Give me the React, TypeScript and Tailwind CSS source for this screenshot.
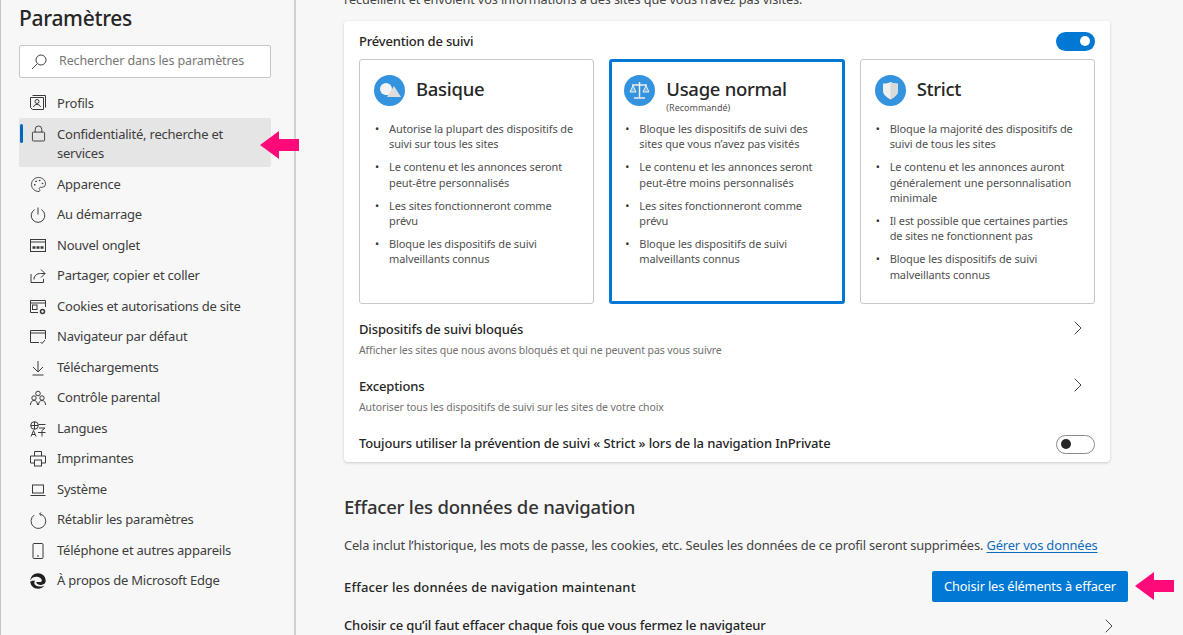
import { ChevronRight, Palette } from 'lucide-react';
import type { ReactNode } from 'react';

const FONT = "font-['Noto_Sans','Open_Sans',sans-serif]";

function Ic({ children }: { children: ReactNode }) {
  return (
    <svg viewBox="0 0 16 16" fill="none" stroke="currentColor" strokeWidth="1" className="w-4 h-4 text-[#3a3a3a]">
      {children}
    </svg>
  );
}

const NAV_TOP: { label: string; icon: ReactNode }[] = [
  {
    label: 'Apparence',
    icon: <Palette className="w-[17px] h-[17px] text-[#3a3a3a]" strokeWidth={1.2} />,
  },
  {
    label: 'Au démarrage',
    icon: (
      <Ic>
        <path d="M8 0.500v7" />
        <path d="M4.500 2.700a6.800 6.800 0 1 0 7 0" />
      </Ic>
    ),
  },
  {
    label: 'Nouvel onglet',
    icon: (
      <Ic>
        <rect x="0.500" y="1.500" width="15" height="12" />
        <path d="M0.500 4h15" />
        <path d="M2.500 9.500h3M6.500 9.500h3M10.500 9.500h3" strokeWidth="2.500" />
      </Ic>
    ),
  },
  {
    label: 'Partager, copier et coller',
    icon: (
      <Ic>
        <path d="M1 6v8.500h12.500V11" />
        <path d="M4 11.500c0-4 3-6 6.500-6H15M11 1.500l4 4-4 4" />
      </Ic>
    ),
  },
  {
    label: 'Cookies et autorisations de site',
    icon: (
      <Ic>
        <path d="M8 13.500H0.500v-12h15V8" />
        <path d="M0.500 4h15" />
        <rect x="2.500" y="6" width="4.500" height="4.500" />
        <circle cx="12.500" cy="12.500" r="2" strokeWidth="1.500" />
      </Ic>
    ),
  },
  {
    label: 'Navigateur par défaut',
    icon: (
      <Ic>
        <path d="M9 13.500H0.500v-12h15V10" />
        <path d="M0.500 4h15" />
        <path d="M10.500 13l1.500 1.500 3-3.500" />
      </Ic>
    ),
  },
  {
    label: 'Téléchargements',
    icon: (
      <Ic>
        <path d="M8 1v10.500M3 7l5 5 5-5M2.500 15h11" />
      </Ic>
    ),
  },
  {
    label: 'Contrôle parental',
    icon: (
      <Ic>
        <circle cx="8" cy="3.500" r="2.300" />
        <circle cx="4" cy="8" r="2.200" />
        <circle cx="12" cy="8" r="2.200" />
        <path d="M0.500 15c0-3 1.500-4.500 3.500-4.500S7.500 12 7.500 15M8.500 15c0-3 1.500-4.500 3.500-4.500s3.500 1.500 3.500 4.500" />
      </Ic>
    ),
  },
  {
    label: 'Langues',
    icon: (
      <Ic>
        <circle cx="4.500" cy="4.500" r="3.800" />
        <path d="M0.700 4.500h7.600M4.500 0.700v7.600" />
        <path d="M1 15.500l2.500-6 2.500 6M2 13.500h3" />
        <path d="M8.500 3.500h7M9 7h6l-3 2.500v6M8 11.500h7.500" />
      </Ic>
    ),
  },
  {
    label: 'Imprimantes',
    icon: (
      <Ic>
        <path d="M4.500 5V0.500h7V5" />
        <path d="M4 12H0.500V5h15v7H12" />
        <rect x="4.500" y="9" width="7" height="6" />
      </Ic>
    ),
  },
  {
    label: 'Système',
    icon: (
      <Ic>
        <rect x="2.500" y="3" width="11" height="8" />
        <path d="M0.500 13.500h15" />
      </Ic>
    ),
  },
  {
    label: 'Rétablir les paramètres',
    icon: (
      <svg viewBox="0 0 18 18" fill="none" stroke="currentColor" strokeWidth="1" className="w-[17px] h-[17px] text-[#3a3a3a]">
        <path d="M4.500 3.200a7.800 7.800 0 1 0 6-1.200" />
        <path d="M11.500 0.500l-1.500 1.700 2 1.800" />
      </svg>
    ),
  },
  {
    label: 'Téléphone et autres appareils',
    icon: (
      <Ic>
        <rect x="3" y="0.500" width="10" height="15" rx="1" />
        <path d="M7 13h2" />
      </Ic>
    ),
  },
  {
    label: 'À propos de Microsoft Edge',
    icon: (
      <svg viewBox="0 0 16 16" className="w-4 h-4 text-[#1f1f1f]" fill="currentColor">
        <path d="M8 0.300C3.800 0.300 0.500 3.500 0.300 7.500 1.500 4.800 4 3.800 6.300 3.800c3 0 5.500 1.700 5.500 3.700 0 .8-.5 1.300-1 1.500H6.200c0 1.200 1.600 2.900 4 2.900 1.800 0 3.300-.6 4.600-1.500C15.400 9.300 15.700 8.600 15.700 7.500 15.500 3.300 12.200 0.300 8 0.300z" />
        <path d="M0.300 8.500c0 4 3.300 7.200 7.700 7.200 2.500 0 4.900-1.200 6.300-3.300-3 1.600-6.300 1.500-8.400.2C4 11.500 4 9 5 7.500 3 7.600 1.200 8 0.300 8.500z" />
      </svg>
    ),
  },
];

type Card = { title: string; sub?: string; selected?: boolean; icon: ReactNode; items: string[] };

const CARDS: Card[] = [
  {
    title: 'Basique',
    icon: (
      <svg viewBox="0 0 31 31" className="w-[31px] h-[31px]">
        <circle cx="15.500" cy="15.500" r="15.500" fill="#3393df" />
        <circle cx="12" cy="14" r="6" fill="#f3f3f3" />
        <path d="M7 11h8l3 9H11z" fill="#f3f3f3" />
        <path d="M20 11l7 11H13z" fill="#dcdcdc" />
      </svg>
    ),
    items: [
      'Autorise la plupart des dispositifs de suivi sur tous les sites',
      'Le contenu et les annonces seront peut-être personnalisés',
      'Les sites fonctionneront comme prévu',
      'Bloque les dispositifs de suivi malveillants connus',
    ],
  },
  {
    title: 'Usage normal',
    sub: '(Recommandé)',
    selected: true,
    icon: (
      <svg viewBox="0 0 31 31" className="w-[31px] h-[31px]">
        <circle cx="15.500" cy="15.500" r="15.500" fill="#3393df" />
        <path d="M15.500 7v15M10 23h11M8 10h15" stroke="#f0f0f0" strokeWidth="1.500" fill="none" />
        <path d="M9 10.500l-3 6.500h6zM22 10.500l-3 6.500h6z" stroke="#f0f0f0" strokeWidth="1" fill="#f0f0f0" fillOpacity=".35" />
      </svg>
    ),
    items: [
      'Bloque les dispositifs de suivi des sites que vous n’avez pas visités',
      'Le contenu et les annonces seront peut-être moins personnalisés',
      'Les sites fonctionneront comme prévu',
      'Bloque les dispositifs de suivi malveillants connus',
    ],
  },
  {
    title: 'Strict',
    icon: (
      <svg viewBox="0 0 31 31" className="w-[31px] h-[31px]">
        <circle cx="15.500" cy="15.500" r="15.500" fill="#3393df" />
        <path d="M8 8.500c3 0 5.500-.5 7.500-1.500 2 1 4.500 1.500 7.500 1.500v7c0 4-3 6.500-7.500 9-4.500-2.500-7.500-5-7.500-9z" fill="#f0f0f0" />
        <path d="M15.500 7c2 1 4.500 1.500 7.500 1.500v7c0 4-3 6.500-7.500 9z" fill="#d9d9d9" />
      </svg>
    ),
    items: [
      'Bloque la majorité des dispositifs de suivi de tous les sites',
      'Le contenu et les annonces auront généralement une personnalisation minimale',
      'Il est possible que certaines parties de sites ne fonctionnent pas',
      'Bloque les dispositifs de suivi malveillants connus',
    ],
  },
];

function NavRow({ label, icon }: { label: string; icon: ReactNode }) {
  return (
    <div className="flex items-center h-[30.500px] pl-[11px] text-[13px] tracking-[-0.22px] text-[#3d3d3d]">
      <span className="w-[27px] shrink-0 flex">{icon}</span>
      <span>{label}</span>
    </div>
  );
}

function PinkArrow() {
  return (
    <svg viewBox="0 0 39 28" className="w-[39px] h-7 text-[#ff0a78]" fill="currentColor">
      <path d="M0 14L19 0v8h20v12H19v8z" />
    </svg>
  );
}

function PrevCard({ card }: { card: Card }) {
  return (
    <div
      className={
        card.selected
          ? 'flex-1 h-[245px] rounded-[3px] border-[3px] border-[#0078d4] pl-[12px] pr-[14px] pt-[13px]'
          : 'flex-1 h-[245px] rounded-[3px] border border-[#c8c8c8] pl-[14px] pr-[16px] pt-[15px]'
      }
    >
      <div className="flex items-start h-[39px]">
        <span className="w-[42px] shrink-0">{card.icon}</span>
        <div>
          <div className="text-[18.500px] leading-[27px] font-medium tracking-[-0.3px] text-[#262626]">{card.title}</div>
          {card.sub && <div className="mt-[2px] text-[9px] leading-[8px] text-[#555]">{card.sub}</div>}
        </div>
      </div>
      <ul className="mt-[7px] space-y-[7.500px]">
        {card.items.map((item) => (
          <li key={item} className="relative pl-[15px] text-[11px] leading-[15.400px] tracking-[-0.1px] text-[#505050]">
            <span className="absolute left-[1px] top-0 text-[#333]">•</span>
            {item}
          </li>
        ))}
      </ul>
    </div>
  );
}

function LinkRow({ title, sub }: { title: string; sub: string }) {
  return (
    <div className="flex items-start justify-between h-[57px] pr-[5px]">
      <div>
        <div className="text-[13px] leading-[20px] font-medium tracking-[-0.14px] text-[#262626]">{title}</div>
        <div className="mt-[1px] text-[10.500px] leading-[20px] tracking-[-0.1px] text-[#707070]">{sub}</div>
      </div>
      <ChevronRight className="w-6 h-6 mt-[-3px] text-[#444]" strokeWidth={1} />
    </div>
  );
}

export default function App() {
  return (
    <div className={`${FONT} relative flex w-[1183px] h-[635px] overflow-hidden bg-[#f7f7f7]`}>
      {/* Barre latérale */}
      <aside className="w-[296px] h-full shrink-0 border-l border-r-2 border-l-[#c4c4c4] border-r-[#d0d0d0] pl-[18px] pr-[23px]">
        <h1 className="mt-[4px] text-[21px] leading-[29px] font-medium tracking-[-0.3px] text-[#262626]">Paramètres</h1>
        <div className="mt-[12px] flex items-center h-[33px] bg-white border border-[#c8c8c8] rounded-[2px] pl-[11px]">
          <svg viewBox="0 0 16 16" fill="none" stroke="currentColor" strokeWidth="1" className="w-4 h-4 text-[#444]">
            <circle cx="10" cy="6" r="5" />
            <path d="M6.300 9.700L1 15" />
          </svg>
          <span className="ml-[12px] text-[12.500px] tracking-[-0.12px] text-[#777]">Rechercher dans les paramètres</span>
        </div>
        <nav className="mt-[10px]">
          <NavRow
            label="Profils"
            icon={
              <Ic>
                <path d="M2.500 0.500h13v12M0.500 2.500h13v12h-11l-2-2z" />
                <circle cx="7" cy="6.500" r="2" />
                <path d="M3.500 12c.5-2 2-2.500 3.500-2.500s3 .5 3.500 2.500" />
              </Ic>
            }
          />
          <div className="relative h-[49px] mt-[-0.500px] mb-[2.250px] flex bg-[#e5e5e5] rounded-[2px] pl-[11px] pt-[7px] text-[13px] leading-[19px] tracking-[-0.22px] text-[#3d3d3d]">
            <span className="absolute left-[1px] top-[6px] h-[19px] w-[3px] rounded-full bg-[#0067c0]" />
            <span className="w-[27px] shrink-0">
              <svg viewBox="0 0 16 18" fill="none" stroke="currentColor" strokeWidth="1" className="w-[15px] h-[17px] ml-[1px] text-[#3a3a3a]">
                <rect x="1.500" y="7.500" width="13" height="9.500" rx="1" />
                <path d="M4.500 7.500V4.500a3.500 3.500 0 0 1 7 0v3" />
              </svg>
            </span>
            <span>Confidentialité, recherche et services</span>
          </div>
          {NAV_TOP.map((n) => (
            <NavRow key={n.label} label={n.label} icon={n.icon} />
          ))}
        </nav>
      </aside>

      {/* Contenu */}
      <main className="w-[766px] ml-[48px] shrink-0">
        <p className="mt-[-9px] text-[12.700px] leading-[17px] tracking-[-0.1px] text-[#444] whitespace-nowrap">
          recueillent et envoient vos informations à des sites que vous n’avez pas visités.
        </p>
        <section className="mt-[13px] h-[441px] bg-white rounded-[4px] shadow-[0_1px_3px_rgba(0,0,0,0.18)] px-[15px] pt-[10px]">
          <div className="flex items-center justify-between h-[20px]">
            <span className="mt-[2px] text-[13px] font-medium tracking-[-0.2px] text-[#262626]">Prévention de suivi</span>
            <span className="flex items-center justify-end w-[39px] h-[19px] rounded-full bg-[#0078d4] pr-[5px]">
              <span className="w-[10px] h-[10px] rounded-full bg-white" />
            </span>
          </div>
          <div className="mt-[8px] flex gap-[15px]">
            {CARDS.map((c) => (
              <PrevCard key={c.title} card={c} />
            ))}
          </div>
          <div className="mt-[15px]">
            <LinkRow title="Dispositifs de suivi bloqués" sub="Afficher les sites que nous avons bloqués et qui ne peuvent pas vous suivre" />
            <LinkRow title="Exceptions" sub="Autoriser tous les dispositifs de suivi sur les sites de votre choix" />
          </div>
          <div className="mt-[1px] flex items-center justify-between h-[20px]">
            <span className="text-[13px] font-medium tracking-[-0.125px] text-[#262626]">
              Toujours utiliser la prévention de suivi « Strict » lors de la navigation InPrivate
            </span>
            <span className="flex items-center w-[39px] h-[19px] rounded-full border border-[#8a8a8a] bg-white pl-[4px]">
              <span className="w-[10px] h-[10px] rounded-full bg-[#262626]" />
            </span>
          </div>
        </section>
        <h2 className="mt-[32px] text-[18.500px] leading-[26px] font-medium tracking-[-0.2px] text-[#333]">
          Effacer les données de navigation
        </h2>
        <p className="mt-[15px] text-[12.860px] leading-[20px] tracking-[-0.15px] text-[#444] whitespace-nowrap">
          Cela inclut l’historique, les mots de passe, les cookies, etc. Seules les données de ce profil seront supprimées.{' '}
          <span className="text-[#0f6cbd] underline underline-offset-2">Gérer vos données</span>
        </p>
        <div className="mt-[16px] flex items-center justify-between h-[31px]">
          <span className="mt-[2px] text-[13px] font-medium tracking-[0.15px] text-[#262626]">Effacer les données de navigation maintenant</span>
          <button className="w-[196px] h-[31px] mr-[-18px] rounded-[2px] bg-[#0078d4] text-white text-[12.800px] tracking-[-0.15px]">
            Choisir les éléments à effacer
          </button>
        </div>
        <div className="mt-[14px] flex items-center justify-between h-[20px]">
          <span className="text-[13px] font-medium tracking-[-0.14px] text-[#262626]">
            Choisir ce qu’il faut effacer chaque fois que vous fermez le navigateur
          </span>
          <ChevronRight className="w-6 h-6 mr-[-11px] shrink-0 text-[#444]" strokeWidth={1} />
        </div>
      </main>

      {/* Flèches roses */}
      <div className="absolute left-[260px] top-[131px]">
        <PinkArrow />
      </div>
      <div className="absolute left-[1135px] top-[572px]">
        <PinkArrow />
      </div>
    </div>
  );
}
